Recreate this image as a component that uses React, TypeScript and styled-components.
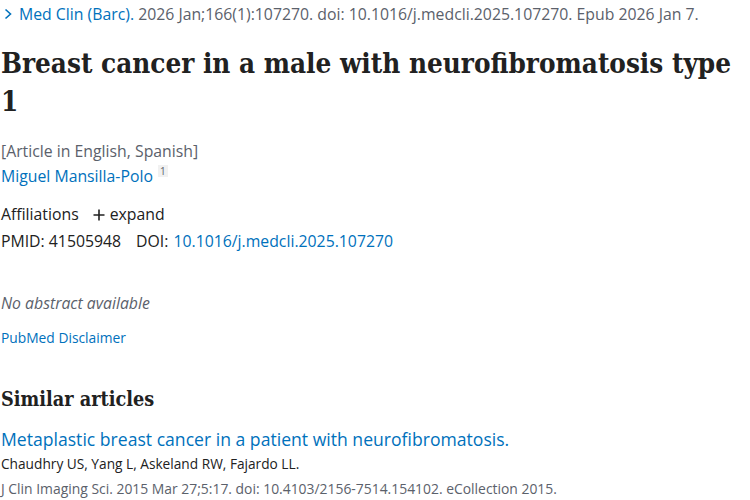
import React from "react";
import styled, { createGlobalStyle } from "styled-components";

const Global = createGlobalStyle`
  html, body { margin: 0; padding: 0; background: #fff; }
  body { font-family: "Open Sans", "Noto Sans", sans-serif; color: #212121; }
`;

const Page = styled.div`
  display: flex;
  flex-direction: column;
  padding: 0 0 0 1px;
  width: 750px;
  height: 500px;
  overflow: hidden;
`;

const Citation = styled.div`
  display: flex;
  align-items: center;
  font-size: 15.8px;
  line-height: 20px;
  color: #5b616b;
  margin-top: 4px;
  white-space: nowrap;
`;

const Chevron = styled.svg`
  width: 10px;
  height: 12px;
  margin: 0 6px 0 2px;
  flex: none;
`;

const Link = styled.a`
  color: #0071bc;
  text-decoration: none;
`;

const Title = styled.h1`
  font-family: "DejaVu Serif Condensed", "Liberation Serif", serif;
  font-stretch: condensed;
  font-weight: 700;
  font-size: 27.6px;
  line-height: 38px;
  color: #212121;
  margin: 21px 0 0 0;
`;

const Meta = styled.div<{ $mt: number }>`
  font-size: 15.8px;
  line-height: 25px;
  color: #5b616b;
  margin-top: ${(p) => p.$mt}px;
`;

const Authors = styled.div`
  font-size: 15.8px;
  line-height: 25px;
  display: flex;
  align-items: flex-start;
`;

const Sup = styled.span`
  font-size: 10px;
  line-height: 12px;
  color: #5b616b;
  background: #f1f1f1;
  padding: 0 2px;
  margin-left: 5px;
  margin-top: 1px;
`;

const Row = styled.div<{ $mt: number; $gap: number }>`
  display: flex;
  align-items: center;
  font-size: 15.8px;
  line-height: 27px;
  color: #212121;
  margin-top: ${(p) => p.$mt}px;
  gap: ${(p) => p.$gap}px;
`;

const Expand = styled.span`
  display: inline-flex;
  align-items: center;
  gap: 5px;
`;

const Item = styled.span`
  display: inline-flex;
  gap: 5px;
`;

const NoAbstract = styled.div`
  font-size: 15.8px;
  font-style: italic;
  color: #5b616b;
  line-height: 24px;
  margin-top: 36px;
`;

const Disclaimer = styled.div`
  font-size: 13.8px;
  line-height: 20px;
  margin-top: 13px;
`;

const SectionTitle = styled.h2`
  font-family: "DejaVu Serif Condensed", "Liberation Serif", serif;
  font-stretch: condensed;
  font-weight: 700;
  font-size: 19.7px;
  line-height: 30px;
  margin: 37px 0 0 0;
  color: #212121;
`;

const SimTitle = styled.div`
  font-size: 17.6px;
  line-height: 24px;
  margin-top: 12px;
`;

const SimAuthors = styled.div`
  font-size: 13.7px;
  line-height: 25px;
  color: #212121;
`;

const SimJournal = styled.div`
  font-size: 13.9px;
  line-height: 25px;
  color: #5b616b;
  white-space: nowrap;
`;

export default function App() {
  return (
    <>
      <Global />
      <Page>
        <Citation>
          <Chevron viewBox="0 0 10 12">
            <path d="M2.5 1.5 L7.5 6 L2.5 10.5" fill="none" stroke="#0071bc" strokeWidth="1.6" />
          </Chevron>
          <Link>Med Clin (Barc).</Link>
          &nbsp;2026 Jan;166(1):107270. doi: 10.1016/j.medcli.2025.107270. Epub 2026 Jan 7.
        </Citation>
        <Title>Breast cancer in a male with neurofibromatosis type 1</Title>
        <Meta $mt={18}>[Article in English, Spanish]</Meta>
        <Authors>
          <Link>Miguel Mansilla-Polo</Link>
          <Sup>1</Sup>
        </Authors>
        <Row $mt={12} $gap={14}>
          <span>Affiliations</span>
          <Expand>
            <svg width="12" height="12" viewBox="0 0 12 12">
              <path d="M6 0.5V11.5M0.5 6H11.5" stroke="#212121" strokeWidth="1.6" />
            </svg>
            expand
          </Expand>
        </Row>
        <Row $mt={0} $gap={15}>
          <Item>PMID: 41505948</Item>
          <Item>
            DOI: <Link>10.1016/j.medcli.2025.107270</Link>
          </Item>
        </Row>
        <NoAbstract>No abstract available</NoAbstract>
        <Disclaimer>
          <Link>PubMed Disclaimer</Link>
        </Disclaimer>
        <SectionTitle>Similar articles</SectionTitle>
        <SimTitle>
          <Link>Metaplastic breast cancer in a patient with neurofibromatosis.</Link>
        </SimTitle>
        <SimAuthors>Chaudhry US, Yang L, Askeland RW, Fajardo LL.</SimAuthors>
        <SimJournal>J Clin Imaging Sci. 2015 Mar 27;5:17. doi: 10.4103/2156-7514.154102. eCollection 2015.</SimJournal>
      </Page>
    </>
  );
}
